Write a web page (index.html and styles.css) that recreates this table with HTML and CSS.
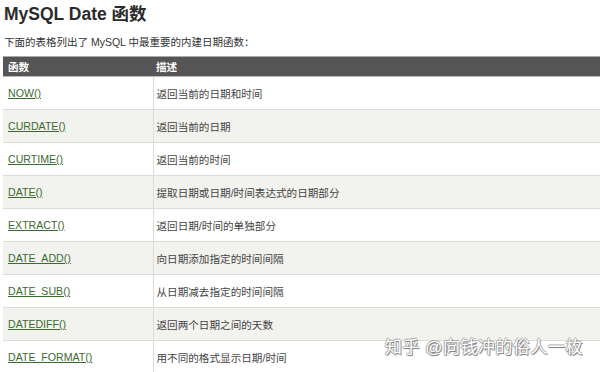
FILE: index.html
```html
<!DOCTYPE html>
<html lang="zh">
<head>
<meta charset="utf-8">
<link rel="stylesheet" href="styles.css">
</head>
<body>
<div class="page">
  <h2 class="title">MySQL Date 函数</h2>
  <p class="intro">下面的表格列出了 MySQL 中最重要的内建日期函数：</p>
  <table class="ref">
    <thead>
      <tr><th class="c1">函数</th><th>描述</th></tr>
    </thead>
    <tbody>
      <tr><td class="c1"><a href="#">NOW()</a></td><td>返回当前的日期和时间</td></tr>
      <tr><td class="c1"><a href="#">CURDATE()</a></td><td>返回当前的日期</td></tr>
      <tr><td class="c1"><a href="#">CURTIME()</a></td><td>返回当前的时间</td></tr>
      <tr><td class="c1"><a href="#">DATE()</a></td><td>提取日期或日期/时间表达式的日期部分</td></tr>
      <tr><td class="c1"><a href="#">EXTRACT()</a></td><td>返回日期/时间的单独部分</td></tr>
      <tr><td class="c1"><a href="#">DATE_ADD()</a></td><td>向日期添加指定的时间间隔</td></tr>
      <tr><td class="c1"><a href="#">DATE_SUB()</a></td><td>从日期减去指定的时间间隔</td></tr>
      <tr><td class="c1"><a href="#">DATEDIFF()</a></td><td>返回两个日期之间的天数</td></tr>
      <tr><td class="c1"><a href="#">DATE_FORMAT()</a></td><td>用不同的格式显示日期/时间</td></tr>
    </tbody>
  </table>
  <div class="watermark">知乎 @向钱冲的俗人一枚</div>
</div>
</body>
</html>
```
FILE: styles.css
```css
html, body {
  margin: 0;
  padding: 0;
  background: #fff;
  overflow: hidden;
}
.page {
  position: relative;
  width: 600px;
  height: 372px;
  overflow: hidden;
  padding-left: 3px;
  box-sizing: border-box;
  font-family: "Liberation Sans", Arial, "Noto Sans CJK SC", sans-serif;
  color: #333;
}
.title {
  margin: 0;
  padding: 4px 0 0 1px;
  font-size: 17.5px;
  line-height: 21px;
  font-weight: bold;
  color: #2b2b2b;
}
.intro {
  margin: 0;
  padding: 10px 0 0 1px;
  font-size: 10.5px;
  line-height: 14px;
  height: 31px;
  box-sizing: border-box;
  color: #333;
}
.ref {
  border-collapse: collapse;
  width: 640px;
  table-layout: fixed;
  font-size: 10.6px;
}
.ref th {
  background: #555;
  color: #fff;
  font-weight: bold;
  text-align: left;
  height: 20px;
  padding: 0 3px;
  box-sizing: border-box;
  border-top: 1px solid #aaa;
  border-bottom: 1px solid #bbb;
  line-height: 18px;
}
.ref th.c1, .ref td.c1 {
  width: 150px;
  padding-left: 5px;
}
.ref td {
  height: 33px;
  padding: 0 3px;
  box-sizing: border-box;
  border-bottom: 1px solid #dcdcdc;
  vertical-align: middle;
  color: #444;
}
.ref td.c1 {
  border-right: 1px solid #dcdcdc;
}
.ref tbody tr:nth-child(even) td {
  background: #f2f2ee;
}
.ref a {
  color: #3b6b2f;
  text-decoration: underline;
}
.watermark {
  position: absolute;
  left: 385px;
  top: 337px;
  font-size: 17px;
  line-height: 22px;
  color: #fff;
  letter-spacing: 0.5px;
  text-shadow: 1px 1px 0 #888, -1px 0 0 #aaa, 0 -1px 0 #aaa, 0 1px 1px #999;
}
```
